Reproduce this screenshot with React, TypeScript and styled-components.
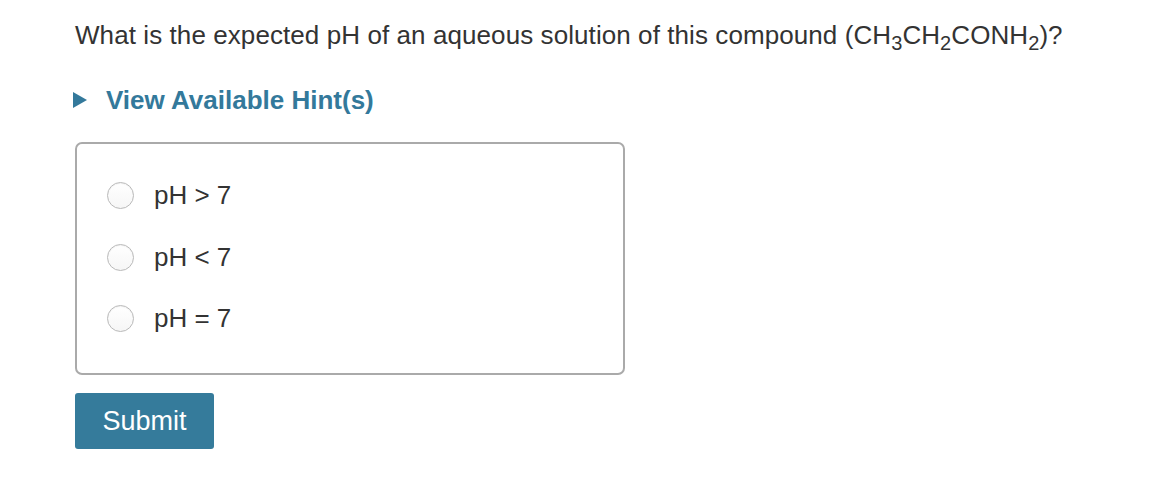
import styled, { createGlobalStyle } from "styled-components";

const GlobalStyle = createGlobalStyle`
  html, body {
    margin: 0;
    padding: 0;
    background: #ffffff;
  }
  body {
    font-family: "Liberation Sans", Arial, Helvetica, sans-serif;
    color: #333333;
  }
`;

const Page = styled.div`
  padding: 17px 0 0 75px;
`;

const Question = styled.p`
  margin: 0;
  font-size: 26px;
  letter-spacing: 0.08px;
  line-height: 36px;
  color: #333333;
`;

const Sub = styled.sub`
  font-size: 20px;
  line-height: 0;
  vertical-align: -6px;
`;

const HintToggle = styled.button`
  display: flex;
  align-items: center;
  gap: 19px;
  margin: 32px 0 0 -2px;
  padding: 0;
  border: none;
  background: none;
  font-family: inherit;
  font-size: 26px;
  font-weight: bold;
  line-height: 30px;
  color: #33799b;
  cursor: pointer;
`;

const Arrow = styled.span`
  width: 0;
  height: 0;
  border-top: 8px solid transparent;
  border-bottom: 8px solid transparent;
  border-left: 14px solid #33799b;
`;

const Choices = styled.div`
  box-sizing: border-box;
  width: 550px;
  height: 233px;
  margin-top: 27px;
  padding: 33.5px 0 0 30px;
  border: 2px solid #aaaaaa;
  border-radius: 7px;
  display: flex;
  flex-direction: column;
  gap: 25.5px;
`;

const Choice = styled.label`
  display: flex;
  align-items: center;
  gap: 20px;
  height: 36px;
  font-size: 26px;
  color: #333333;
  cursor: pointer;
`;

const Radio = styled.span`
  box-sizing: border-box;
  width: 27px;
  height: 27px;
  border-radius: 50%;
  border: 1px solid #b9b9b9;
  background: linear-gradient(#ffffff, #f6f6f6);
  box-shadow: inset 0 1px 1px rgba(0, 0, 0, 0.05);
`;

const SubmitButton = styled.button`
  margin-top: 18px;
  width: 139px;
  height: 56px;
  border: none;
  border-radius: 3px;
  background: #357b9b;
  color: #ffffff;
  font-family: inherit;
  font-size: 27px;
  cursor: pointer;
`;

const options = ["pH > 7", "pH < 7", "pH = 7"];

const App = () => {
  return (
    <>
      <GlobalStyle />
      <Page>
        <Question>
          What is the expected pH of an aqueous solution of this compound (CH
          <Sub>3</Sub>CH<Sub>2</Sub>CONH<Sub>2</Sub>)?
        </Question>
        <HintToggle>
          <Arrow />
          View Available Hint(s)
        </HintToggle>
        <Choices>
          {options.map((o) => (
            <Choice key={o}>
              <Radio />
              {o}
            </Choice>
          ))}
        </Choices>
        <SubmitButton>Submit</SubmitButton>
      </Page>
    </>
  );
};

export default App;
